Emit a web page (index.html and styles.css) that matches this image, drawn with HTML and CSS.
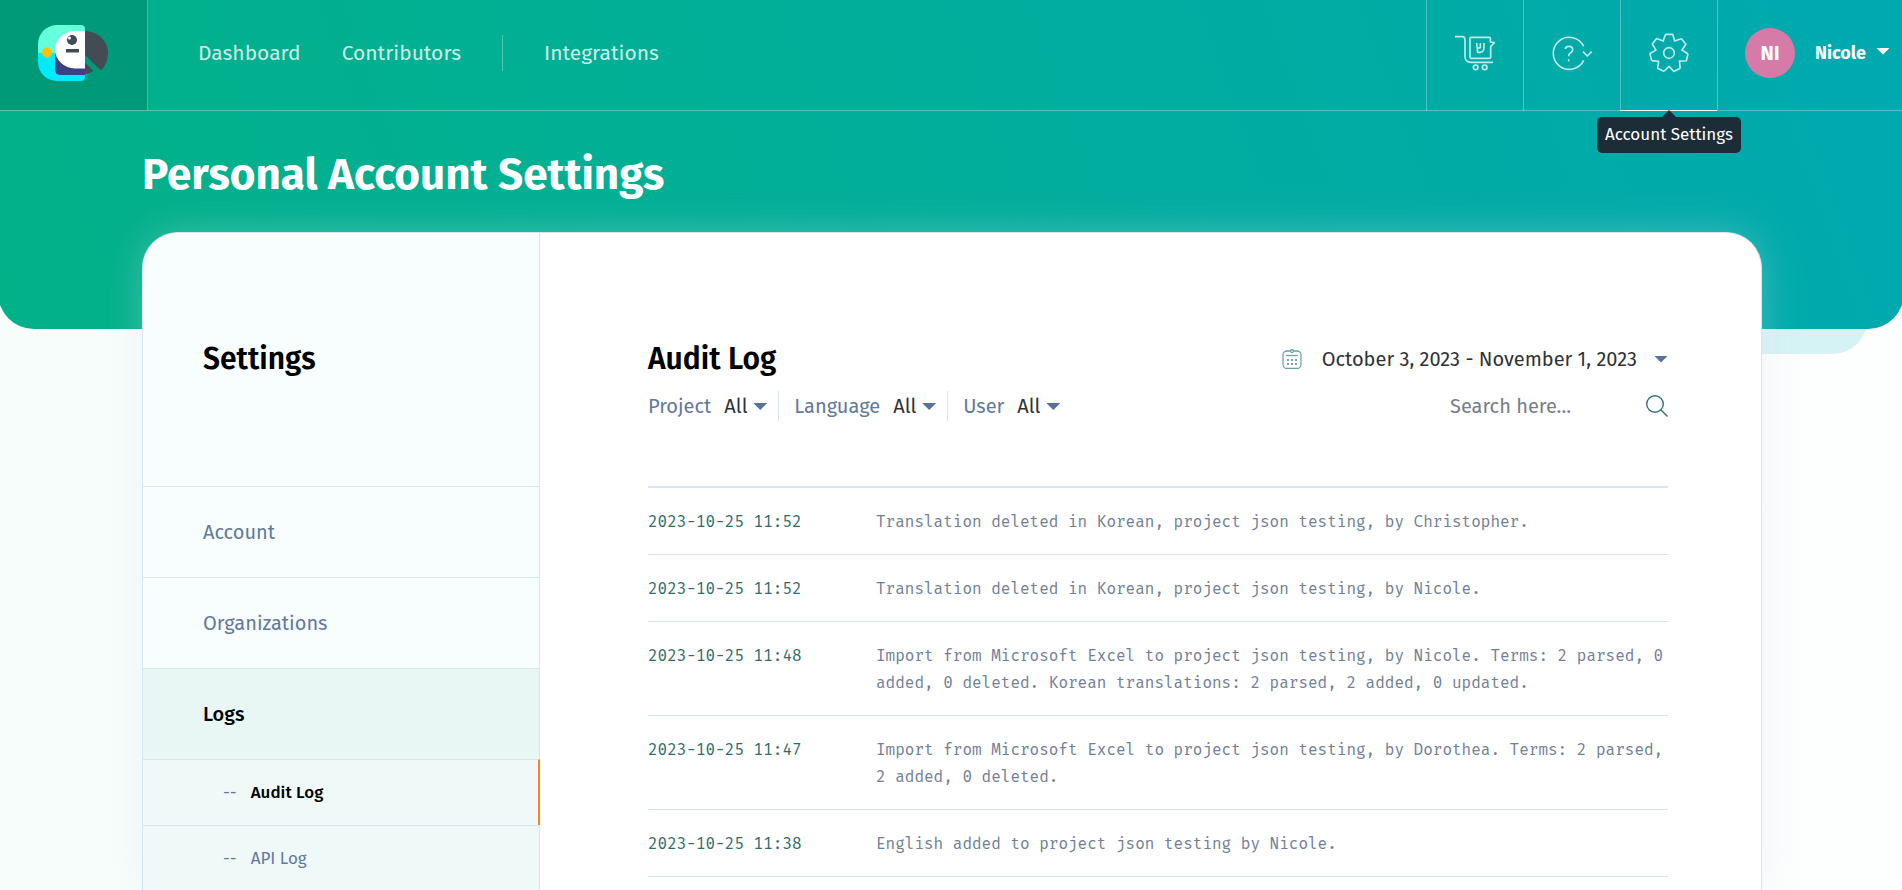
FILE: index.html
```html
<!DOCTYPE html>
<html lang="en">
<head>
    <meta charset="UTF-8">
    <meta name="viewport" content="width=device-width, initial-scale=1.0">
    <title>Personal Account Settings</title>
    <link rel="stylesheet" href="styles.css">
</head>
<body>
    <div class="page">
        <header class="topbar">
            <a href="#" class="logo" aria-label="Home">
                <svg viewBox="38 25 70 56" width="70" height="56">
                    <clipPath id="head"><path d="M57 25H81a4 4 0 0 1 4 4V77a4 4 0 0 1-4 4H57a19 19 0 0 1-19-19V44a19 19 0 0 1 19-19z"/></clipPath>
                    <g clip-path="url(#head)">
                        <path fill="#66ffdb" d="M38 25h47v28H38z"/>
                        <path fill="#00eaff" d="M38 53h47v28H38z"/>
                    </g>
                    <path fill="#3b4184" d="M55 53h30v22H60a5 5 0 0 1-5-5z"/>
                    <path fill="#fff" d="M85 31H75a20 19 0 0 0-20 19a20 19 0 0 0 20 18.500h10z"/>
                    <path fill="#454b55" d="M85 31a23 22 0 0 1 23 22q0 10-7 17.500L85 55zM85 62.500l8.500 8.500q-3.500 2.500-8.500 2.500z"/>
                    <circle cx="72" cy="40" r="5" fill="#454b55"/>
                    <circle cx="69.500" cy="38" r="1.500" fill="#fff"/>
                    <path fill="#454b55" d="M66 49h13v3.500H66z"/>
                    <circle cx="47" cy="52.500" r="5" fill="#ffc107"/>
                </svg>
            </a>
            <nav class="main-nav">
                <a href="#">Dashboard</a>
                <a href="#">Contributors</a>
                <span class="nav-divider"></span>
                <a href="#">Integrations</a>
            </nav>
            <div class="tools">
                <a href="#" class="tool" aria-label="Order translations">
                    <svg class="tool-icon" viewBox="165 98 120 120">
                        <path d="M165 109h21q9 0 9 9v50q0 18 18 18h66"/>
                        <path d="M213 111h55q3 0 3 3v11l12 2l-11 12v32q0 3-3 3h-56q-3 0-3-3v-57q0-3 3-3z"/>
                        <path d="M230 128l3 28h7q11 0 12-13v-15M241 128v14l-8 2"/>
                        <circle cx="227" cy="201" r="7"/>
                        <circle cx="254" cy="201" r="7"/>
                    </svg>
                </a>
                <a href="#" class="tool" aria-label="Help">
                    <svg class="tool-icon" viewBox="456 98 120 120">
                        <path d="M551 138A48 48 0 1 0 551 180"/>
                        <path d="M549 154l13 13l13-13"/>
                        <path d="M496 146q1-8 11-8q11 0 11 10q0 6-6 9q-6 3-6 11M506 177v6"/>
                    </svg>
                </a>
                <a href="#" class="tool active" aria-label="Account Settings">
                    <svg class="tool-icon" viewBox="-60 -60 120 120">
                        <defs><path id="tooth" d="M-11-56H11L17-36L37-43"/></defs>
                        <use href="#tooth"/>
                        <use href="#tooth" transform="rotate(51.430)"/>
                        <use href="#tooth" transform="rotate(102.860)"/>
                        <use href="#tooth" transform="rotate(154.290)"/>
                        <use href="#tooth" transform="rotate(205.710)"/>
                        <use href="#tooth" transform="rotate(257.140)"/>
                        <use href="#tooth" transform="rotate(308.570)"/>
                        <circle r="16"/>
                    </svg>
                    <span class="tooltip">Account Settings</span>
                </a>
                <button type="button" class="user">
                    <span class="avatar">NI</span>
                    <span>Nicole</span>
                    <span class="caret"></span>
                </button>
            </div>
        </header>

        <h1 class="page-title">Personal Account Settings</h1>

        <div class="card">
            <aside class="sidebar">
                <h2>Settings</h2>
                <a href="#" class="side-item">Account</a>
                <a href="#" class="side-item">Organizations</a>
                <a href="#" class="side-item current">Logs</a>
                <a href="#" class="side-item sub current"><span class="dash">--</span>Audit Log</a>
                <a href="#" class="side-item sub"><span class="dash">--</span>API Log</a>
            </aside>

            <main class="content">
                <div class="content-head">
                    <h2>Audit Log</h2>
                    <button type="button" class="date-range">
                        <svg class="calendar" viewBox="0 0 20 20">
                            <path d="M8 2H5a4 4 0 0 0-4 4v9.500a4 4 0 0 0 4 4h10a4 4 0 0 0 4-4V6a4 4 0 0 0-4-4h-3"/>
                            <circle cx="10" cy="2" r="1.500"/>
                            <path d="M4 6.500h12"/>
                            <path class="dots" d="M5 11h10M5 15h10"/>
                        </svg>
                        <span>October 3, 2023 - November 1, 2023</span>
                        <span class="caret"></span>
                    </button>
                </div>

                <form class="filters">
                    <div class="filter">
                        <label for="project">Project</label>
                        <div class="select"><select id="project"><option>All</option></select></div>
                    </div>
                    <div class="filter">
                        <label for="language">Language</label>
                        <div class="select"><select id="language"><option>All</option></select></div>
                    </div>
                    <div class="filter">
                        <label for="user">User</label>
                        <div class="select"><select id="user"><option>All</option></select></div>
                    </div>
                    <div class="search">
                        <input type="text" aria-label="Search" placeholder="Search here...">
                        <button type="submit" aria-label="Search">
                            <svg viewBox="0 0 22 22" width="22" height="22">
                                <circle cx="9" cy="9" r="8.300"/>
                                <path d="M15 15l6.500 6.500"/>
                            </svg>
                        </button>
                    </div>
                </form>

                <table class="log">
                    <tbody>
                        <tr>
                            <td class="time">2023-10-25 11:52</td>
                            <td>Translation deleted in Korean, project json testing, by Christopher.</td>
                        </tr>
                        <tr>
                            <td class="time">2023-10-25 11:52</td>
                            <td>Translation deleted in Korean, project json testing, by Nicole.</td>
                        </tr>
                        <tr>
                            <td class="time">2023-10-25 11:48</td>
                            <td>Import from Microsoft Excel to project json testing, by Nicole. Terms: 2 parsed, 0 added, 0 deleted. Korean translations: 2 parsed, 2 added, 0 updated.</td>
                        </tr>
                        <tr>
                            <td class="time">2023-10-25 11:47</td>
                            <td>Import from Microsoft Excel to project json testing, by Dorothea. Terms: 2 parsed, 2 added, 0 deleted.</td>
                        </tr>
                        <tr>
                            <td class="time">2023-10-25 11:38</td>
                            <td>English added to project json testing by Nicole.</td>
                        </tr>
                    </tbody>
                </table>
            </main>
        </div>
    </div>
</body>
</html>
```

FILE: styles.css
```css
/* Base styles */
* {
    margin: 0;
    padding: 0;
    box-sizing: border-box;
}

body {
    font-family: "Fira Sans", "Noto Sans", sans-serif;
    font-size: 20px;
    line-height: 28px;
    color: #2f3338;
    background: linear-gradient(to right, #f7fdfb, #fdfefe);
}

a {
    color: inherit;
    text-decoration: none;
}

button,
input,
select {
    font: inherit;
    color: inherit;
    background: none;
    border: 0;
}

button {
    cursor: pointer;
}

.page {
    position: relative;
    display: flex;
    flex-direction: column;
    min-height: 100vh;
    overflow: hidden;
}

/* Green backdrop and the pale layer under it */
.page::before,
.page::after {
    content: "";
    position: absolute;
    top: 0;
    left: -2px;
    right: -2px;
    height: 329px;
    border-radius: 0 0 36px 36px;
    background: linear-gradient(70deg, #02b188, #01ae9b 50%, #00a9b0);
    z-index: -1;
}

.page::after {
    left: 50%;
    right: 34px;
    height: 354px;
    background: #d5f3f5;
    z-index: -2;
}

/* Top bar */
.topbar {
    display: flex;
    height: 111px;
    border-bottom: 1px solid rgba(255, 255, 255, 0.3);
    color: #fff;
}

.logo {
    display: flex;
    align-items: center;
    width: 148px;
    padding: 0 0 4px 38px;
    background: rgba(0, 0, 0, 0.13);
    border-right: 1px solid rgba(255, 255, 255, 0.3);
}

.main-nav {
    display: flex;
    align-items: center;
    gap: 41px;
    padding: 0 0 4px 50px;
    color: rgba(255, 255, 255, 0.8);
    font-size: 21px;
}

.nav-divider {
    width: 1px;
    height: 36px;
    background: rgba(255, 255, 255, 0.3);
}

.tools {
    display: flex;
    margin-left: auto;
}

.tool {
    position: relative;
    display: flex;
    align-items: center;
    justify-content: center;
    width: 97px;
    height: 111px;
    padding-bottom: 5px;
    border-left: 1px solid rgba(255, 255, 255, 0.3);
}

.tool.active {
    border-bottom: 1px solid #fff;
    padding-bottom: 4px;
}

.tool-icon {
    width: 40px;
    height: 40px;
    fill: none;
    stroke: #fff;
    stroke-width: 5;
    stroke-linejoin: round;
    opacity: 0.75;
    overflow: visible;
}

.tooltip {
    position: absolute;
    top: 117px;
    left: 50%;
    transform: translateX(-50%);
    padding: 4px 8px;
    border-radius: 5px;
    background: #1c2d38;
    font-size: 17px;
    white-space: nowrap;
}

.tooltip::before {
    content: "";
    position: absolute;
    top: -7px;
    left: 50%;
    margin-left: -7px;
    border: 7px solid transparent;
    border-top: 0;
    border-bottom-color: #1c2d38;
}

.user {
    display: flex;
    align-items: center;
    padding: 0 12px 4px 27px;
    border-left: 1px solid rgba(255, 255, 255, 0.3);
    font-size: 18px;
    font-weight: 700;
}

.avatar {
    width: 50px;
    margin-right: 20px;
    border-radius: 50%;
    background: #d67ba7;
    font-size: 20px;
    line-height: 50px;
}

.caret {
    width: 14px;
    height: 7px;
    background: #56749b;
    clip-path: polygon(0 0, 100% 0, 50% 100%);
}

.user .caret {
    margin: 0 0 4px 10px;
    background: #fff;
}

.page-title {
    padding: 36px 142px 29px;
    font-size: 44px;
    font-weight: 700;
    line-height: 56px;
    color: #fff;
}

/* Card */
.card {
    flex: 1;
    display: flex;
    margin: 0 140px 0 142px;
    border: 1px solid #d5e7ec;
    border-bottom: 0;
    border-radius: 36px 36px 0 0;
    background: #fff;
    box-shadow: 0 0 40px rgba(215, 218, 235, 0.3);
    overflow: hidden;
}

h2 {
    font-size: 30px;
    font-weight: 600;
    line-height: 40px;
    color: #000;
}

.sidebar {
    width: 397px;
    border-right: 1px solid #d5e7ec;
    background: #f8fefe;
}

.sidebar h2 {
    padding: 106px 60px 107px;
}

.side-item {
    display: block;
    padding: 31px 60px;
    border-top: 1px solid #d5e7ec;
    color: #63799c;
}

.side-item.current {
    background: #e8f7f4;
    color: #000;
    font-weight: 500;
}

.side-item.sub {
    padding: 19px 80px 18px;
    background: #eff9f8;
    font-size: 17px;
}

.side-item.sub.current {
    margin-right: -1px;
    border-right: 2px solid #fa8219;
}

.dash {
    margin-right: 14px;
    color: #63799c;
    font-weight: 400;
}

/* Audit log */
.content {
    flex: 1;
    padding: 106px 93px 0 108px;
}

.content-head {
    display: flex;
    justify-content: space-between;
    align-items: center;
}

.date-range {
    display: flex;
    align-items: center;
}

.calendar {
    width: 20px;
    height: 20px;
    margin-right: 20px;
    fill: none;
    stroke: #6da3a3;
    stroke-width: 1.300;
}

.calendar .dots {
    stroke-width: 2;
    stroke-dasharray: 2 2;
}

.date-range .caret {
    margin-left: 17px;
}

.filters {
    display: flex;
    align-items: center;
    margin-top: 12px;
}

.filter {
    display: flex;
    align-items: center;
    height: 30px;
    padding-right: 11px;
    margin-right: 15px;
    border-right: 1px solid #d5e7ec;
    color: #63799c;
}

.filter:nth-child(3) {
    border-right: 0;
}

.select {
    position: relative;
    margin-left: 13px;
    color: #2f3338;
}

.select select {
    display: block;
    appearance: none;
    padding-right: 19px;
    cursor: pointer;
}

.select::after {
    content: "";
    position: absolute;
    top: 11px;
    right: 0;
    width: 14px;
    height: 7px;
    background: #56749b;
    clip-path: polygon(0 0, 100% 0, 50% 100%);
    pointer-events: none;
}

.search {
    display: flex;
    align-items: center;
    margin-left: auto;
}

.search input {
    width: 196px;
}

.search input::placeholder {
    color: #757d88;
}

.search button {
    display: flex;
}

.search svg {
    fill: none;
    stroke: #357572;
    stroke-width: 1.400;
}

.log {
    width: 100%;
    margin-top: 65px;
    border-top: 2px solid #d5e7ec;
    border-spacing: 0;
    font-family: "Fira Mono", "Liberation Mono", monospace;
    font-size: 16px;
    line-height: 27px;
    color: #718096;
}

.log td {
    padding: 20px 0 19px;
    border-bottom: 1px solid #d5e7ec;
    vertical-align: top;
}

.log .time {
    width: 228px;
    color: #2f6b6b;
}
```
